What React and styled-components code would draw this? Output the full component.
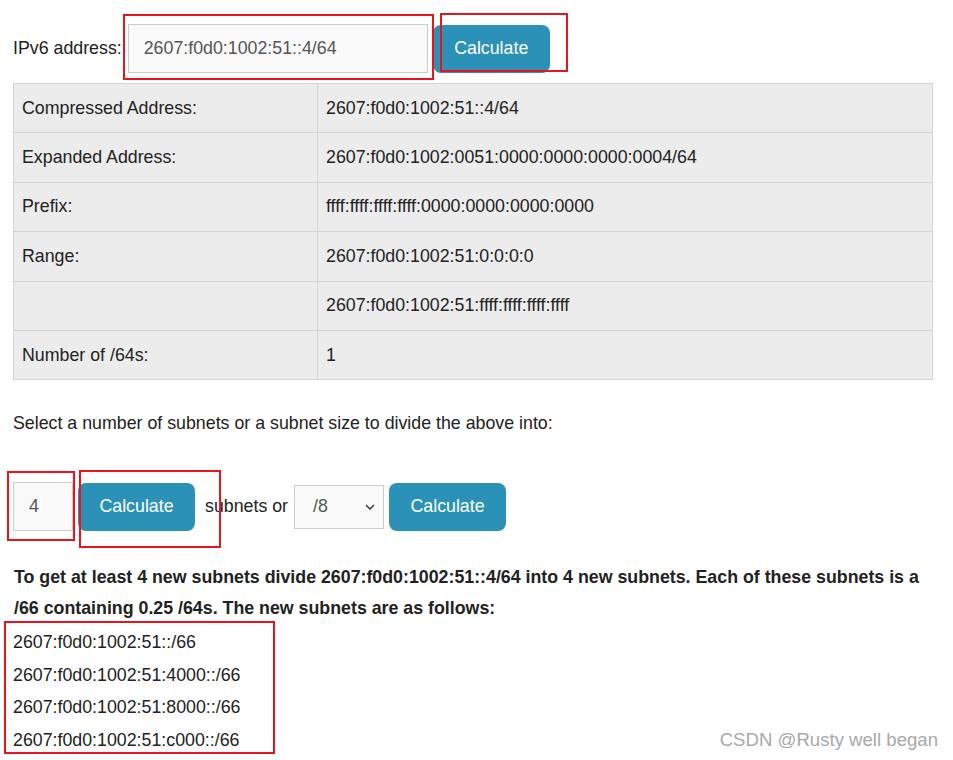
import React from "react";
import styled, { createGlobalStyle } from "styled-components";

const Global = createGlobalStyle`
  html, body { margin: 0; padding: 0; background: #fff; }
  body {
    font-family: "Liberation Sans", Arial, sans-serif;
    font-size: 17.8px;
    color: #222;
  }
`;

const Page = styled.div`
  position: relative;
  width: 953px;
  height: 760px;
  padding: 24px 0 0 13px;
  box-sizing: border-box;
`;

const FormRow = styled.div`
  display: flex;
  align-items: center;
  gap: ${(p) => p.$gap || 5}px;
  margin-top: ${(p) => p.$mt || 0}px;
`;

const Label = styled.span`
  margin-right: 1px;
`;

const Text = styled.span`
  margin: 0 1px 0 5px;
`;

const TextInput = styled.input`
  box-sizing: border-box;
  width: ${(p) => p.$w}px;
  height: 49px;
  border: 1px solid #cccccc;
  background: #f9f9f9;
  padding: 0 0 0 ${(p) => p.$pl}px;
  font: inherit;
  color: #555;
  outline: none;
`;

const Button = styled.button`
  box-sizing: border-box;
  width: 117px;
  height: 48px;
  border: none;
  border-radius: 8px;
  background: #2b91b7;
  color: #fff;
  font: inherit;
  padding: 0;
  cursor: pointer;
`;

const SelectBox = styled.div`
  position: relative;
  box-sizing: border-box;
  width: 90px;
  height: 44px;
  border: 1px solid #cccccc;
  background: #f9f9f9;
  color: #555;
  display: flex;
  align-items: center;
  padding-left: 18px;
`;

const Chevron = styled.svg`
  position: absolute;
  right: 8px;
  top: 50%;
  margin-top: -3px;
`;

const Table = styled.table`
  width: 920px;
  margin-top: 10px;
  border-collapse: collapse;
  table-layout: fixed;
  background: #ececec;
`;

const Col = styled.col`
  width: ${(p) => p.$w};
`;

const Cell = styled.td`
  border: 1px solid #d4d4d4;
  height: 48.4px;
  padding: 0 0 0 8px;
  vertical-align: middle;
`;

const Para = styled.p`
  margin: 32px 0 0 0;
  line-height: 22px;
`;

const Bold = styled.p`
  margin: 31px 0 0 1px;
  font-weight: bold;
  line-height: 31px;
  width: 920px;
`;

const SubnetList = styled.div`
  margin-top: 2px;
`;

const Subnet = styled.div`
  line-height: 32.4px;
`;

const Mark = styled.div`
  position: absolute;
  left: ${(p) => p.$x}px;
  top: ${(p) => p.$y}px;
  width: ${(p) => p.$w}px;
  height: ${(p) => p.$h}px;
  border: 2px solid #e8151f;
  box-sizing: border-box;
  pointer-events: none;
`;

const Watermark = styled.div`
  position: absolute;
  right: 15px;
  top: 729px;
  color: #a9a9a9;
  font-size: 18.6px;
  font-family: "Liberation Sans", Arial, sans-serif;
`;

const rows = [
  ["Compressed Address:", "2607:f0d0:1002:51::4/64"],
  ["Expanded Address:", "2607:f0d0:1002:0051:0000:0000:0000:0004/64"],
  ["Prefix:", "ffff:ffff:ffff:ffff:0000:0000:0000:0000"],
  ["Range:", "2607:f0d0:1002:51:0:0:0:0"],
  ["", "2607:f0d0:1002:51:ffff:ffff:ffff:ffff"],
  ["Number of /64s:", "1"],
];

const subnets = [
  "2607:f0d0:1002:51::/66",
  "2607:f0d0:1002:51:4000::/66",
  "2607:f0d0:1002:51:8000::/66",
  "2607:f0d0:1002:51:c000::/66",
];

export default function App() {
  return (
    <>
      <Global />
      <Page>
        <FormRow>
          <Label>IPv6 address:</Label>
          <TextInput $w={300} $pl={15} defaultValue="2607:f0d0:1002:51::4/64" />
          <Button>Calculate</Button>
        </FormRow>
        <Table>
          <colgroup>
            <Col $w="304px" />
            <Col $w="auto" />
          </colgroup>
          <tbody>
            {rows.map(([a, b], i) => (
              <tr key={i}>
                <Cell>{a}</Cell>
                <Cell>{b}</Cell>
              </tr>
            ))}
          </tbody>
        </Table>
        <Para>Select a number of subnets or a subnet size to divide the above into:</Para>
        <FormRow $mt={48} $gap={5}>
          <TextInput $w={60} $pl={15} defaultValue="4" />
          <Button>Calculate</Button>
          <Text>subnets or</Text>
          <SelectBox>
            /8
            <Chevron width="10" height="6" viewBox="0 0 10 6">
              <path d="M1 1 L5 5 L9 1" fill="none" stroke="#444" strokeWidth="1.6" />
            </Chevron>
          </SelectBox>
          <Button>Calculate</Button>
        </FormRow>
        <Bold>
          To get at least 4 new subnets divide 2607:f0d0:1002:51::4/64 into 4 new subnets. Each of these
          subnets is a /66 containing 0.25 /64s. The new subnets are as follows:
        </Bold>
        <SubnetList>
          {subnets.map((s) => (
            <Subnet key={s}>{s}</Subnet>
          ))}
        </SubnetList>
        <Mark $x={123} $y={14} $w={311} $h={66} />
        <Mark $x={440} $y={13} $w={128} $h={59} />
        <Mark $x={7} $y={471} $w={68} $h={70} />
        <Mark $x={79} $y={470} $w={142} $h={78} />
        <Mark $x={4} $y={621} $w={271} $h={133} />
        <Watermark>CSDN @Rusty well began</Watermark>
      </Page>
    </>
  );
}
